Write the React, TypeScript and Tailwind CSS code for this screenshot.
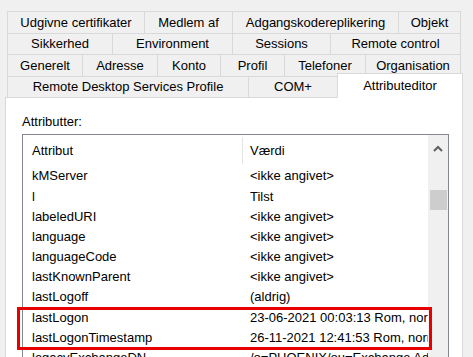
const font = { fontFamily: '"Liberation Sans", Arial, sans-serif' };

interface Tab {
  label: string;
  w: string;
}

const rows: { h: string; tabs: Tab[] }[] = [
  {
    h: 'h-[22px]',
    tabs: [
      { label: 'Udgivne certifikater', w: 'w-[137px]' },
      { label: 'Medlem af', w: 'w-[88px]' },
      { label: 'Adgangskodereplikering', w: 'w-[166px]' },
      { label: 'Objekt', w: 'w-[63px]' },
    ],
  },
  {
    h: 'h-[21px]',
    tabs: [
      { label: 'Sikkerhed', w: 'w-[105px]' },
      { label: 'Environment', w: 'w-[120px]' },
      { label: 'Sessions', w: 'w-[98px]' },
      { label: 'Remote control', w: 'w-[131px]' },
    ],
  },
  {
    h: 'h-[22px]',
    tabs: [
      { label: 'Generelt', w: 'w-[75px]' },
      { label: 'Adresse', w: 'w-[75px]' },
      { label: 'Konto', w: 'w-[63px]' },
      { label: 'Profil', w: 'w-[64px]' },
      { label: 'Telefoner', w: 'w-[81px]' },
      { label: 'Organisation', w: 'w-[96px]' },
    ],
  },
];

const attrs = [
  ['kMServer', '<ikke angivet>'],
  ['l', 'Tilst'],
  ['labeledURI', '<ikke angivet>'],
  ['language', '<ikke angivet>'],
  ['languageCode', '<ikke angivet>'],
  ['lastKnownParent', '<ikke angivet>'],
  ['lastLogoff', '(aldrig)'],
  ['lastLogon', '23-06-2021 00:03:13 Rom, normaltid'],
  ['lastLogonTimestamp', '26-11-2021 12:41:53 Rom, normaltid'],
  ['legacyExchangeDN', '/o=PHOENIX/ou=Exchange Administrative Group'],
];

function TabRow({ h, tabs }: { h: string; tabs: Tab[] }) {
  return (
    <div className={`flex ${h}`}>
      {tabs.map((t, i) => (
        <div
          key={t.label}
          className={`${t.w} flex items-center justify-center border-t border-l border-[#d9d9d9] ${
            i === tabs.length - 1 ? 'border-r' : ''
          }`}
        >
          {t.label}
        </div>
      ))}
    </div>
  );
}

export default function App() {
  return (
    <div
      className="relative w-[473px] h-[357px] overflow-hidden bg-[#f0f0f0] text-[13px] text-black"
      style={font}
    >
      <div className="pt-[11px] pl-[7px]">
        {rows.map((r, i) => (
          <TabRow key={i} h={r.h} tabs={r.tabs} />
        ))}
        <div className="flex h-[21px] items-end">
          <div className="w-[241px] h-[21px] flex items-center justify-center border-t border-l border-[#d9d9d9]">
            Remote Desktop Services Profile
          </div>
          <div className="w-[89px] h-[21px] flex items-center justify-center border-t border-l border-[#d9d9d9]">
            COM+
          </div>
          <div className="relative z-10 w-[126px] h-[25px] -mb-px flex items-start justify-center pt-[2px] bg-white border-t border-l border-r border-[#d9d9d9]">
            Attributeditor
          </div>
        </div>
      </div>

      <div className="ml-[5px] w-[458px] h-[270px] bg-white border border-[#d9d9d9] pt-[14px] pl-[16px]">
        <div className="h-[22px]">Attributter:</div>
        <div className="w-[427px] h-[240px] border border-[#828790] flex overflow-hidden">
          <div className="flex-1 overflow-hidden">
            <div className="flex h-[31px] items-center">
              <div className="w-[219px] pl-[9px]">Attribut</div>
              <div className="w-px h-[27px] bg-[#e5e5e5]" />
              <div className="pl-[7px]">Værdi</div>
            </div>
            {attrs.map(([a, v]) => (
              <div key={a} className="flex h-[20.2px] items-center whitespace-nowrap">
                <div className="w-[220px] pl-[9px] shrink-0">{a}</div>
                <div className="pl-[7px]">{v}</div>
              </div>
            ))}
          </div>
          <div className="w-[20px] h-full bg-[#f0f0f0] flex flex-col items-center">
            <svg width="10" height="8" viewBox="0 0 10 8" className="mt-[10px]">
              <path d="M1 6 L5 2 L9 6" fill="none" stroke="#606060" strokeWidth="2" />
            </svg>
            <div className="mt-[37px] w-[17px] h-[20px] bg-[#cdcdcd]" />
          </div>
        </div>
      </div>

      <div className="absolute left-[17px] top-[307px] w-[415px] h-[43px] border-[3px] border-[#e80000]" />
    </div>
  );
}
